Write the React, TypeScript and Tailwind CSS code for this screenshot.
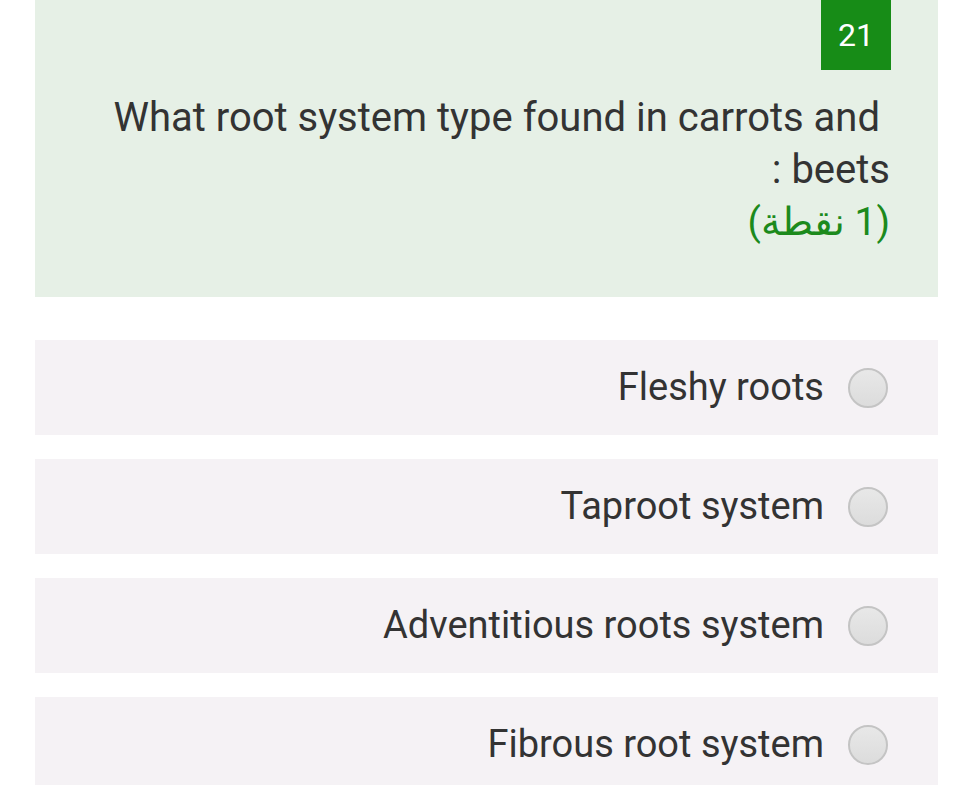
const options = ["Fleshy roots", "Taproot system", "Adventitious roots system", "Fibrous root system"];

function Radio() {
  return (
    <span className="block h-[40px] w-[40px] shrink-0 rounded-full border-2 border-[#c4c4c4] bg-gradient-to-b from-[#e8e8e8] to-[#dcdcdc]" />
  );
}

export default function App() {
  return (
    <main className="h-[785px] w-[972px] overflow-hidden bg-white font-['Roboto',sans-serif] text-[#333]">
      <section className="ml-[35px] mr-[34px] flex h-[297px] flex-col items-end bg-[#e6f0e6] pr-[48px]">
        <div className="mr-[-1px] flex h-[70px] w-[70px] items-center justify-center bg-[#178c17] text-[32px] text-white">
          21
        </div>
        <h2 className="mt-[22px] text-right text-[40px] leading-[52px]">
          <span className="block pr-[10px]">What root system type found in carrots and</span>
          <span className="block">: beets</span>
        </h2>
        <p dir="rtl" className="text-[39px] leading-[52px] text-[#1c8a1c]">(1 نقطة)</p>
      </section>

      <div className="ml-[35px] mr-[34px] mt-[43px] flex flex-col gap-[24px]">
        {options.map((o) => (
          <label key={o} className="flex h-[95px] items-center justify-end gap-[24px] bg-[#f5f2f5] pr-[50px]">
            <span className="text-[38px]">{o}</span>
            <Radio />
          </label>
        ))}
      </div>
    </main>
  );
}
